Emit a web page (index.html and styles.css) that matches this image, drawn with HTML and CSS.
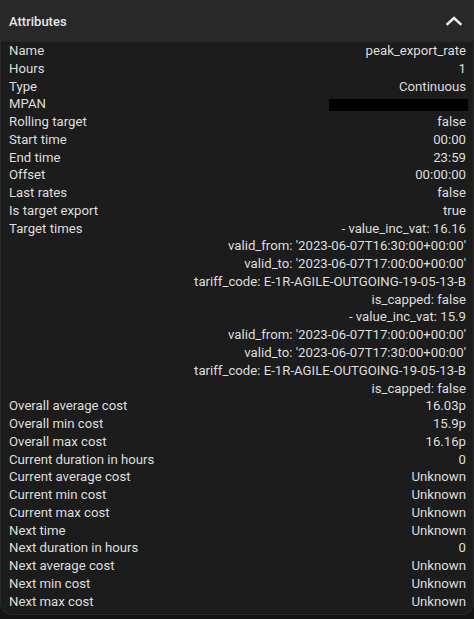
FILE: index.html
```html
<!DOCTYPE html>
<html>
<head>
<meta charset="utf-8">
<link rel="stylesheet" href="styles.css">
</head>
<body>
<div class="card">
  <div class="header">
    <span class="title">Attributes</span>
    <svg class="chev" width="16" height="10" viewBox="0 0 16 10"><polyline points="1.5,8 8,2 14.5,8" fill="none" stroke="#ececec" stroke-width="2.4" stroke-linecap="square"/></svg>
  </div>
  <div class="rows">
    <div class="row"><span>Name</span><span class="val">peak_export_rate</span></div>
    <div class="row"><span>Hours</span><span class="val">1</span></div>
    <div class="row"><span>Type</span><span class="val">Continuous</span></div>
    <div class="row"><span>MPAN</span><span class="val"><span class="redact"></span></span></div>
    <div class="row"><span>Rolling target</span><span class="val">false</span></div>
    <div class="row"><span>Start time</span><span class="val">00:00</span></div>
    <div class="row"><span>End time</span><span class="val">23:59</span></div>
    <div class="row"><span>Offset</span><span class="val">00:00:00</span></div>
    <div class="row"><span>Last rates</span><span class="val">false</span></div>
    <div class="row"><span>Is target export</span><span class="val">true</span></div>
    <div class="row"><span>Target times</span><span class="val multi">- value_inc_vat: 16.16
valid_from: '2023-06-07T16:30:00+00:00'
valid_to: '2023-06-07T17:00:00+00:00'
tariff_code: E-1R-AGILE-OUTGOING-19-05-13-B
is_capped: false
- value_inc_vat: 15.9
valid_from: '2023-06-07T17:00:00+00:00'
valid_to: '2023-06-07T17:30:00+00:00'
tariff_code: E-1R-AGILE-OUTGOING-19-05-13-B
is_capped: false</span></div>
    <div class="row"><span>Overall average cost</span><span class="val">16.03p</span></div>
    <div class="row"><span>Overall min cost</span><span class="val">15.9p</span></div>
    <div class="row"><span>Overall max cost</span><span class="val">16.16p</span></div>
    <div class="row"><span>Current duration in hours</span><span class="val">0</span></div>
    <div class="row"><span>Current average cost</span><span class="val">Unknown</span></div>
    <div class="row"><span>Current min cost</span><span class="val">Unknown</span></div>
    <div class="row"><span>Current max cost</span><span class="val">Unknown</span></div>
    <div class="row"><span>Next time</span><span class="val">Unknown</span></div>
    <div class="row"><span>Next duration in hours</span><span class="val">0</span></div>
    <div class="row"><span>Next average cost</span><span class="val">Unknown</span></div>
    <div class="row"><span>Next min cost</span><span class="val">Unknown</span></div>
    <div class="row"><span>Next max cost</span><span class="val">Unknown</span></div>
  </div>
</div>
</body>
</html>
```
FILE: styles.css
```css
html, body {
  margin: 0;
  padding: 0;
  background: #141414;
}
body {
  width: 474px;
  height: 619px;
  overflow: hidden;
  font-family: Roboto, "Liberation Sans", sans-serif;
  color: #dedede;
}
.card {
  height: 615px;
  background: #1c1c1c;
  border-radius: 0 0 12px 12px;
  border: 1px solid #2a2a2a;
  border-top: none;
  box-sizing: border-box;
  overflow: hidden;
}
.header {
  height: 42px;
  background: #282828;
  display: flex;
  align-items: center;
  justify-content: space-between;
  padding: 0 11px 0 8px;
  box-sizing: border-box;
}
.title {
  font-size: 13px;
  font-weight: 500;
  color: #e6e6e6;
}
.chev {
  display: block;
}
.rows {
  padding: 0 7px 0 8px;
}
.row {
  display: flex;
  justify-content: space-between;
  align-items: flex-start;
  font-size: 13.2px;
  line-height: 17.77px;
}
.val {
  text-align: right;
}
.multi {
  white-space: pre-line;
}
.redact {
  display: inline-block;
  width: 139px;
  height: 12px;
  background: #000;
  vertical-align: middle;
  margin-right: -2px;
}
```
